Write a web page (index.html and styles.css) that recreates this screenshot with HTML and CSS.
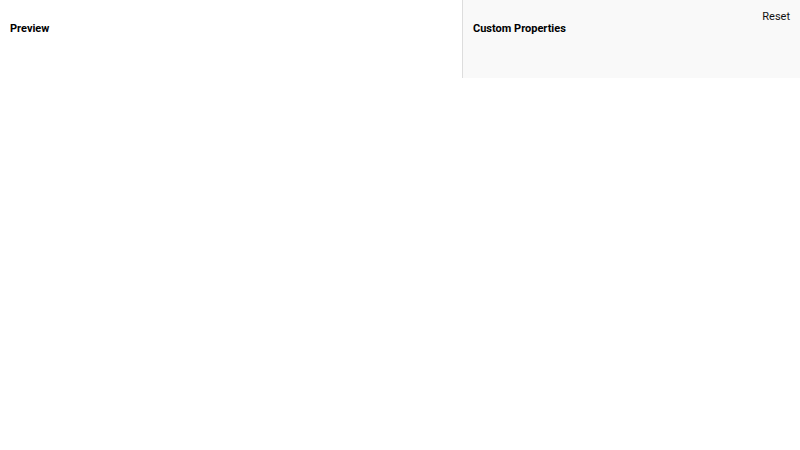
FILE: index.html
```html
<!DOCTYPE html>
<html>
<head>
<meta charset="utf-8">
<link rel="stylesheet" href="styles.css">
</head>
<body>
<div class="app">
  <section class="preview">
    <h3 class="title">Preview</h3>
  </section>
  <aside class="props">
    <button class="reset">Reset</button>
    <h3 class="title">Custom Properties</h3>
  </aside>
</div>
</body>
</html>
```
FILE: styles.css
```css
html, body {
  margin: 0;
  padding: 0;
  background: #fff;
  font-family: Roboto, "Liberation Sans", Arial, sans-serif;
  color: #000;
}
.app {
  display: flex;
  align-items: flex-start;
}
.preview {
  flex: 1;
  padding: 0 10px;
  height: 78px;
  box-sizing: border-box;
}
.props {
  position: relative;
  box-sizing: border-box;
  width: 338px;
  height: 78px;
  padding: 0 10px;
  background: #f9f9f9;
  border-left: 1px solid #ddd;
}
.title {
  margin: 22px 0 0;
  font-size: 11px;
  line-height: 13px;
  font-weight: bold;
}
.reset {
  position: absolute;
  top: 8px;
  right: 6px;
  background: none;
  border: none;
  font-family: inherit;
  font-size: 11px;
  color: #111;
  padding: 2px 4px;
  cursor: pointer;
}
```
